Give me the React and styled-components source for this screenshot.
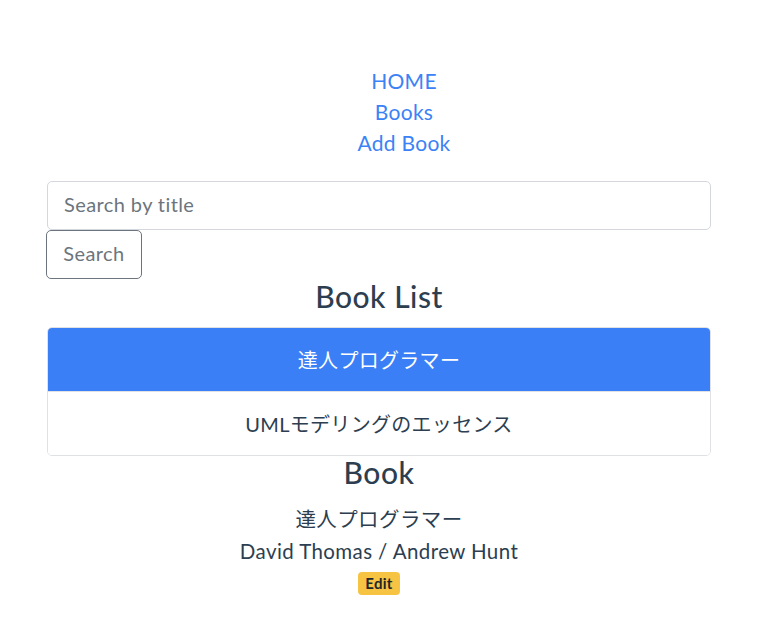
import React from "react";
import styled, { createGlobalStyle } from "styled-components";

const GlobalStyle = createGlobalStyle`
    body {
        margin: 0;
        background: #ffffff;
        font-family: Lato, "Noto Sans CJK JP", sans-serif;
        color: #2c3e50;
    }
`;

const Page = styled.div`
    width: 768px;
    padding-top: 65px;
`;

const Nav = styled.ul`
    list-style: none;
    margin: 0;
    padding-left: 40px;
    text-align: center;
`;

const NavItem = styled.li`
    font-size: 21px;
    line-height: 31px;
    letter-spacing: 0.3px;
    a {
        color: #3b82f6;
        text-decoration: none;
    }
`;

const Content = styled.div`
    width: 664px;
    margin: 23px 0 0 47px;
`;

const SearchInput = styled.input`
    display: block;
    box-sizing: border-box;
    width: 100%;
    height: 49px;
    padding: 0 16px 3px;
    border: 1px solid #d4d7dc;
    border-radius: 5px;
    font-family: inherit;
    font-size: 20px;
    letter-spacing: 0.4px;
    color: #2c3e50;
    outline: none;
    &::placeholder {
        color: #6c757d;
    }
`;

const SearchButton = styled.button`
    display: block;
    box-sizing: border-box;
    margin-left: -1px;
    width: 96px;
    height: 49px;
    padding: 0 0 3px;
    border: 1px solid #6c757d;
    border-radius: 5px;
    background: #ffffff;
    font-family: inherit;
    font-size: 20px;
    letter-spacing: 0.4px;
    color: #6c757d;
`;

const Heading = styled.h4`
    margin: 0 0 ${props => props.gap}px;
    text-align: center;
    font-weight: 500;
    font-size: 30px;
    letter-spacing: 0.5px;
    line-height: ${props => props.lineHeight}px;
`;

const List = styled.ul`
    list-style: none;
    margin: 0;
    padding: 0;
    border: 1px solid #dfe1e5;
    border-radius: 5px;
    overflow: hidden;
`;

const ListItem = styled.li`
    height: 63px;
    display: flex;
    align-items: center;
    justify-content: center;
    font-size: 20px;
    letter-spacing: 0.3px;
    background: ${props => (props.active ? "#3b7ff6" : "#ffffff")};
    color: ${props => (props.active ? "#ffffff" : "#2c3e50")};
    & + & {
        border-top: 1px solid #dfe1e5;
    }
`;

const Detail = styled.div`
    text-align: center;
`;

const DetailLine = styled.div`
    font-size: 20.5px;
    letter-spacing: 0.4px;
    line-height: 32px;
`;

const Badge = styled.span`
    display: inline-block;
    margin-top: 5px;
    padding: 0 7px;
    height: 23px;
    line-height: 23px;
    border-radius: 4px;
    background: #f6c343;
    color: #212529;
    font-size: 15px;
    font-weight: 700;
    letter-spacing: 0.3px;
`;

const books = [
    { id: 1, title: "達人プログラマー", author: "David Thomas / Andrew Hunt" },
    { id: 2, title: "UMLモデリングのエッセンス", author: "Martin Fowler" }
];

const App = () => {
    const current = books[0];
    return (
        <Page>
            <GlobalStyle />
            <Nav>
                <NavItem><a href="#">HOME</a></NavItem>
                <NavItem><a href="#">Books</a></NavItem>
                <NavItem><a href="#">Add Book</a></NavItem>
            </Nav>
            <Content>
                <SearchInput placeholder="Search by title" />
                <SearchButton>Search</SearchButton>
                <Heading gap={14} lineHeight={34}>Book List</Heading>
                <List>
                    {books.map(book => (
                        <ListItem key={book.id} active={book.id === current.id}>
                            {book.title}
                        </ListItem>
                    ))}
                </List>
                <Detail>
                    <Heading gap={15} lineHeight={32}>Book</Heading>
                    <DetailLine>{current.title}</DetailLine>
                    <DetailLine>{current.author}</DetailLine>
                    <Badge>Edit</Badge>
                </Detail>
            </Content>
        </Page>
    );
};

export default App;
